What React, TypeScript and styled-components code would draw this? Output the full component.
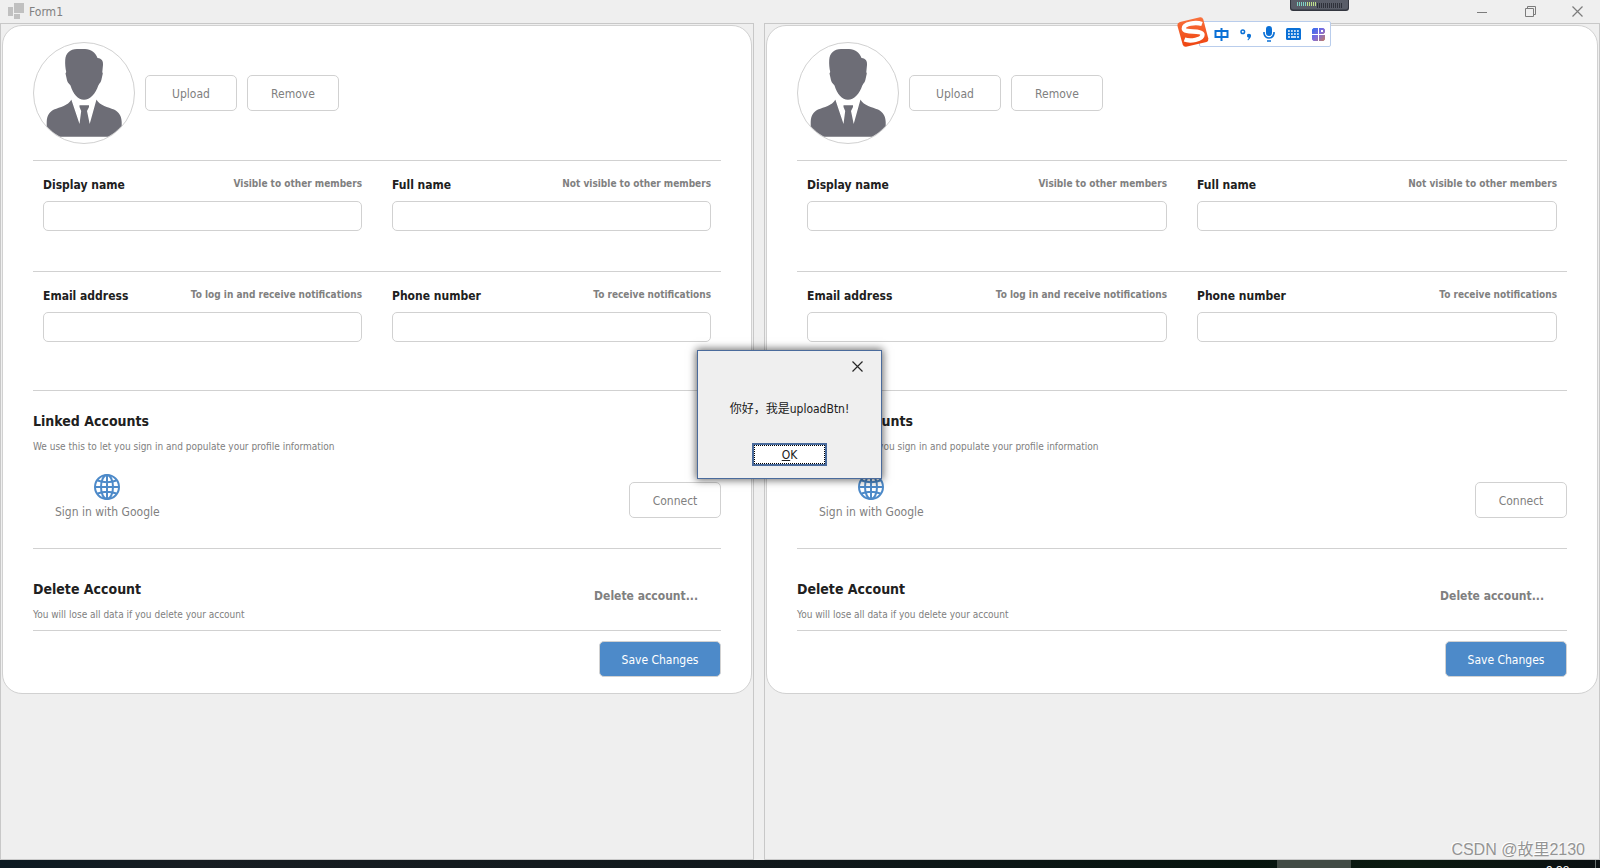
import React from "react";
import styled, { createGlobalStyle } from "styled-components";

const GlobalStyle = createGlobalStyle`
  * { box-sizing: border-box; }
  body {
    margin: 0;
    background: #efefef;
    color: #202020;
    font: 12px/16px "DejaVu Sans Condensed", "Noto Sans CJK SC", sans-serif;
  }
  button, input { font: inherit; }
  h2, p { margin: 0; }
`;

const Window = styled.div`
  position: relative;
  display: flex;
  flex-direction: column;
  height: 100vh;
  overflow: hidden;
`;

const TitleBar = styled.header`
  display: flex;
  align-items: center;
  height: 23px;
  flex: none;
  padding-left: 8px;
  gap: 5px;
  color: #808080;
`;

const WindowControls = styled.div`
  display: flex;
  margin-left: auto;
  height: 100%;
`;

const CaptionButton = styled.button`
  display: flex;
  align-items: center;
  justify-content: center;
  width: 48px;
  padding: 0;
  border: 0;
  background: none;
  color: #7c7c7c;
  &:last-child { width: 46px; }
`;

const Panels = styled.main`
  flex: 1;
  display: grid;
  grid-template-columns: 754fr 836fr;
  gap: 10px;
  min-height: 0;
`;

const Panel = styled.div`
  border: 1px solid #c8c8c8;
  padding: 1px;
`;

const Card = styled.form`
  display: flex;
  flex-direction: column;
  padding: 0 30px 16px;
  border: 1px solid #d1d1d1;
  border-radius: 20px;
  background: #fff;
`;

const Section = styled.section`
  border-bottom: 1px solid #d1d1d1;
`;

const AvatarSection = styled(Section)`
  display: flex;
  align-items: center;
  gap: 10px;
  padding: 16px 0;
`;

const AvatarFrame = styled.div`
  width: 102px;
  height: 102px;
  border-radius: 50%;
  border: 1px solid #d1d1d1;
  overflow: hidden;
`;

const Button = styled.button<{ $primary?: boolean }>`
  height: 36px;
  min-width: 92px;
  padding: 1px 21px 0;
  border: 1px solid #d1d1d1;
  border-radius: 5px;
  background: ${(p) => (p.$primary ? "#4d8ac9" : "#fff")};
  color: ${(p) => (p.$primary ? "#fff" : "#808080")};
`;

const SaveButton = styled(Button)`
  min-width: 122px;
`;

const LinkButton = styled.button`
  height: 38px;
  padding: 0 23px;
  border: 0;
  background: none;
  color: #808080;
  font-weight: 700;
`;

const FieldSection = styled(Section)<{ $space: number }>`
  display: grid;
  grid-template-columns: 1fr 1fr;
  gap: 30px;
  padding: 14px 10px ${(p) => p.$space}px;
`;

const FieldHead = styled.div`
  display: flex;
  justify-content: space-between;
  align-items: flex-start;
  height: 20px;
  margin-bottom: 6px;
  padding-top: 2px;
`;

const Label = styled.label`
  font-weight: 700;
`;

const Hint = styled.span`
  font-size: 10px;
  line-height: 14px;
  font-weight: 700;
  color: #808080;
`;

const TextBox = styled.input`
  display: block;
  width: 100%;
  height: 30px;
  padding: 0 8px;
  border: 1px solid #d1d1d1;
  border-radius: 5px;
  background: #fff;
`;

const Heading = styled.h2`
  font-size: 14px;
  line-height: 20px;
`;

const SubText = styled.p`
  margin-top: 8px;
  font-size: 10px;
  color: #808080;
`;

const LinkedSection = styled(Section)`
  padding: 20px 0 22px;
`;

const LinkedRow = styled.div`
  display: flex;
  justify-content: space-between;
  align-items: center;
  height: 52px;
  margin-top: 19px;
`;

const Provider = styled.div`
  display: flex;
  flex-direction: column;
  align-items: center;
  align-self: flex-start;
  gap: 4px;
  padding-left: 22px;
  color: #808080;
`;

const DeleteSection = styled(Section)`
  display: flex;
  justify-content: space-between;
  align-items: flex-start;
  padding: 28px 0 7px;
`;

const DeleteText = styled.div`
  padding-top: 2px;
`;

const Actions = styled.div`
  display: flex;
  justify-content: flex-end;
  padding-top: 10px;
`;

const Dialog = styled.div`
  position: absolute;
  left: 697px;
  top: 350px;
  display: flex;
  flex-direction: column;
  align-items: center;
  width: 185px;
  height: 129px;
  border: 1px solid #4a6b9c;
  background: #efefef;
  box-shadow: 0 0 8px 1px rgba(0, 0, 0, 0.6);
`;

const DialogClose = styled.button`
  display: flex;
  align-items: center;
  justify-content: center;
  align-self: flex-end;
  width: 47px;
  height: 30px;
  padding: 0;
  border: 0;
  background: none;
  color: #262626;
`;

const Message = styled.p`
  margin: 20px 0 26px;
`;

const OkButton = styled.button`
  width: 75px;
  height: 23px;
  padding: 0;
  border: 2px solid #4a6b9c;
  outline: 1px dotted #000;
  outline-offset: -3px;
  background: #fff;
  color: #202020;
`;

const ImeBar = styled.div`
  position: absolute;
  top: 17px;
  right: 269px;
  display: flex;
  align-items: flex-end;
`;

const ImeTools = styled.div`
  display: flex;
  align-items: center;
  justify-content: space-between;
  width: 132px;
  height: 26px;
  margin-left: -10px;
  padding: 0 5px 0 14px;
  border: 1px solid #b9cdec;
  border-radius: 2px;
  background: #fff;
`;

const ImeLogo = styled.svg`
  position: relative;
  z-index: 1;
`;

const MeterTab = styled.svg`
  position: absolute;
  top: 0;
  right: 251px;
`;

const Taskbar = styled.footer`
  display: flex;
  justify-content: flex-end;
  height: 8px;
  flex: none;
  overflow: hidden;
  background: linear-gradient(90deg, #0c1a22, #171d22 12%, #10181b 50%, #06140e 78%, #0b1a10 88%, #0a1012);
  color: #fff;
`;

const TaskItem = styled.div`
  width: 74px;
  margin-right: 195px;
  background: #424b45;
`;

const Clock = styled.time`
  width: 49px;
  padding-top: 3px;
  font: 12px/16px "Liberation Sans", sans-serif;
`;

const ShowDesktop = styled.div`
  width: 5px;
  border-left: 1px solid #6a7270;
`;

const Watermark = styled.div`
  position: absolute;
  right: 15px;
  bottom: 8px;
  color: #949494;
  font: 16px/20px "Liberation Sans", "Noto Sans CJK SC", sans-serif;
  text-shadow: -1px -1px 0 #fff;
`;

const CloseGlyph = () => (
  <svg width="11" height="11" viewBox="0 0 11 11" stroke="currentColor" strokeWidth="1.2">
    <path d="M.5.5l10 10M10.5.5l-10 10" />
  </svg>
);

const Portrait = () => (
  <svg width="100" height="100" viewBox="1 1 100 100">
    <path
      fill="#6d6d76"
      d="M13.7 94.7V80C14 74 16 70 21 67.500C27 65 35 63.500 38.300 57.700L51 60L63.500 57.700C67 63.500 75 65 81 67.500C86 70 88.500 74 88.700 80V94.7Z"
    />
    <path
      fill="#fff"
      d="M38.300 57.500L46.500 82L48.200 69L46.500 65V63.300H56V65L54 69L56.700 82L63.500 57.500L60 52H42Z"
    />
    <path
      fill="#6d6d76"
      d="M51 57.700C45 57.700 40 52 37.500 43.500L35.800 41.500C34.500 40.500 34 38.500 33.500 36L32.500 31.500L33.200 30C32.300 26 32 22 32.200 18C32.700 11 37 7 44 7H52C58 7 62.500 10.500 64.500 16C69 16.500 70.300 19 70 23L69.300 30L69.800 31.500L68.800 36C68.300 38.500 67.800 40.500 66.500 41.500L65.300 43.500C62.500 52 57 57.700 51 57.700Z"
    />
  </svg>
);

const Globe = () => (
  <svg width="26" height="26" viewBox="0 0 26 26" fill="none" stroke="#4d8ac9" strokeWidth="2">
    <circle cx="13" cy="13" r="12" />
    <ellipse cx="13" cy="13" rx="6" ry="12" />
    <path d="M13 1V25M1 13H25M3.6 6.5C9 8.4 17 8.4 22.4 6.5M3.6 19.5C9 17.6 17 17.6 22.4 19.5" />
  </svg>
);

interface FieldProps {
  id: string;
  label: string;
  hint: string;
}

const Field = ({ id, label, hint }: FieldProps) => (
  <div>
    <FieldHead>
      <Label htmlFor={id}>{label}</Label>
      <Hint>{hint}</Hint>
    </FieldHead>
    <TextBox id={id} type="text" />
  </div>
);

const ProfileCard = ({ id }: { id: string }) => (
  <Card onSubmit={(e) => e.preventDefault()}>
    <AvatarSection>
      <AvatarFrame>
        <Portrait />
      </AvatarFrame>
      <Button type="button">Upload</Button>
      <Button type="button">Remove</Button>
    </AvatarSection>
    <FieldSection $space={40}>
      <Field id={`${id}-display`} label="Display name" hint="Visible to other members" />
      <Field id={`${id}-full`} label="Full name" hint="Not visible to other members" />
    </FieldSection>
    <FieldSection $space={48}>
      <Field id={`${id}-email`} label="Email address" hint="To log in and receive notifications" />
      <Field id={`${id}-phone`} label="Phone number" hint="To receive notifications" />
    </FieldSection>
    <LinkedSection>
      <Heading>Linked Accounts</Heading>
      <SubText>We use this to let you sign in and populate your profile information</SubText>
      <LinkedRow>
        <Provider>
          <Globe />
          Sign in with Google
        </Provider>
        <Button type="button">Connect</Button>
      </LinkedRow>
    </LinkedSection>
    <DeleteSection>
      <DeleteText>
        <Heading>Delete Account</Heading>
        <SubText>You will lose all data if you delete your account</SubText>
      </DeleteText>
      <LinkButton type="button">Delete account...</LinkButton>
    </DeleteSection>
    <Actions>
      <SaveButton $primary type="submit">Save Changes</SaveButton>
    </Actions>
  </Card>
);

const meterBars = Array.from({ length: 23 }, (_, i) => i);

export default function App() {
  return (
    <Window>
      <GlobalStyle />
      <TitleBar>
        <svg width="16" height="17" viewBox="0 0 16 17" fill="#c0c0c0">
          <path d="M0 4H5V13H0ZM6 0H16V10H6ZM6 11H12V16H6Z" />
        </svg>
        Form1
        <WindowControls>
          <CaptionButton aria-label="Minimize">
            <svg width="10" height="10" stroke="currentColor"><path d="M0 5.5H10" /></svg>
          </CaptionButton>
          <CaptionButton aria-label="Restore">
            <svg width="11" height="11" fill="none" stroke="currentColor">
              <path d="M.5 2.5H8.5V10.5H.5ZM2.5 2.5V.5H10.5V8.5H8.5" />
            </svg>
          </CaptionButton>
          <CaptionButton aria-label="Close"><CloseGlyph /></CaptionButton>
        </WindowControls>
      </TitleBar>

      <Panels>
        <Panel><ProfileCard id="left" /></Panel>
        <Panel><ProfileCard id="right" /></Panel>
      </Panels>

      <Taskbar>
        <TaskItem />
        <Clock>9:38</Clock>
        <ShowDesktop />
      </Taskbar>

      <MeterTab width="59" height="11" viewBox="0 0 59 11">
        <path d="M0 0H59V8Q59 11 56 11H3Q0 11 0 8Z" fill="#33363f" />
        <path d="M1 0H58V7Q58 9.500 55.500 9.500H3.500Q1 9.500 1 7Z" fill="#595d68" />
        {meterBars.map((i) => (
          <rect
            key={i}
            x={7 + i * 2}
            y={i < 10 ? 2 : 3}
            width="1"
            height={i < 10 ? 4 : 5}
            fill={i < 5 ? "#7fd3c4" : i < 10 ? "#bfe08a" : "#2e313a"}
          />
        ))}
      </MeterTab>

      <ImeBar>
        <ImeLogo width="32" height="30" viewBox="0 0 32 30">
          <defs>
            <linearGradient id="sogou" x1="0" y1="0" x2="0" y2="1">
              <stop offset="0" stopColor="#f9713c" />
              <stop offset="1" stopColor="#ee4410" />
            </linearGradient>
          </defs>
          <path
            fill="url(#sogou)"
            d="M3 5L23 .3Q25.500 0 26.300 2.500L31.300 21.500Q31.800 24 29.500 25L9 29.800Q6.500 30 5.700 27.500L.500 9Q0 6 3 5Z"
          />
          <path
            d="M25 7C19 5 6.500 6.500 6.800 11.500C7.200 16.500 25.500 12.500 25.500 17.800C25.500 23 13 24.500 7.500 22.500"
            fill="none"
            stroke="#fff"
            strokeWidth="4.400"
          />
        </ImeLogo>
        <ImeTools>
          <svg width="15" height="15" viewBox="0 0 15 15" fill="none" stroke="#0a70d6" strokeWidth="2">
            <path d="M1.500 4H13.500V10H1.500ZM7.500 1V14" />
          </svg>
          <svg width="12" height="13" viewBox="0 0 12 13">
            <circle cx="2.800" cy="3.800" r="1.800" fill="none" stroke="#0a70d6" strokeWidth="1.500" />
            <path d="M7 6.500Q9 5 10.800 6.500Q12 9 8 12.500L7.500 11.500Q9 10.500 8.500 9.500Q6.500 9 7 6.500Z" fill="#0a70d6" />
          </svg>
          <svg width="12" height="16" viewBox="0 0 12 16">
            <rect x="3" y="0" width="6" height="10" rx="3" fill="#0a70d6" />
            <path d="M1 6V7.500Q2 12 6 12Q10 12 11 7.500V6M4 15H8" fill="none" stroke="#0a70d6" strokeWidth="1.600" />
          </svg>
          <svg width="15" height="12" viewBox="0 0 15 12">
            <rect width="15" height="12" rx="1.500" fill="#0a70d6" />
            <path d="M2 3H13M2 6H13" stroke="#fff" strokeWidth="1.600" strokeDasharray="1.800 1.200" />
            <path d="M2 9H4M5 9H10M11 9H13" stroke="#fff" strokeWidth="1.400" />
          </svg>
          <svg width="13" height="13" viewBox="0 0 13 13">
            <defs>
              <linearGradient id="tools" x1="0" y1="0" x2="1" y2="1">
                <stop offset="0" stopColor="#2f6bf0" />
                <stop offset=".5" stopColor="#7f6cdc" />
                <stop offset="1" stopColor="#c07a62" />
              </linearGradient>
            </defs>
            <path
              fill="url(#tools)"
              fillRule="evenodd"
              d="M1.500 0H6V6H0V1.500ZM7 0H11.500L13 1.500V4.500L11.500 6H7ZM0 7H6V13H1.500L0 11.500ZM7 7H13V11.500L11.500 13H7ZM9 2V4H11V2Z"
            />
          </svg>
        </ImeTools>
      </ImeBar>

      <Dialog role="dialog" aria-label="Message">
        <DialogClose aria-label="Close dialog"><CloseGlyph /></DialogClose>
        <Message>你好，我是uploadBtn!</Message>
        <OkButton><u>O</u>K</OkButton>
      </Dialog>

      <Watermark>CSDN @故里2130</Watermark>
    </Window>
  );
}
